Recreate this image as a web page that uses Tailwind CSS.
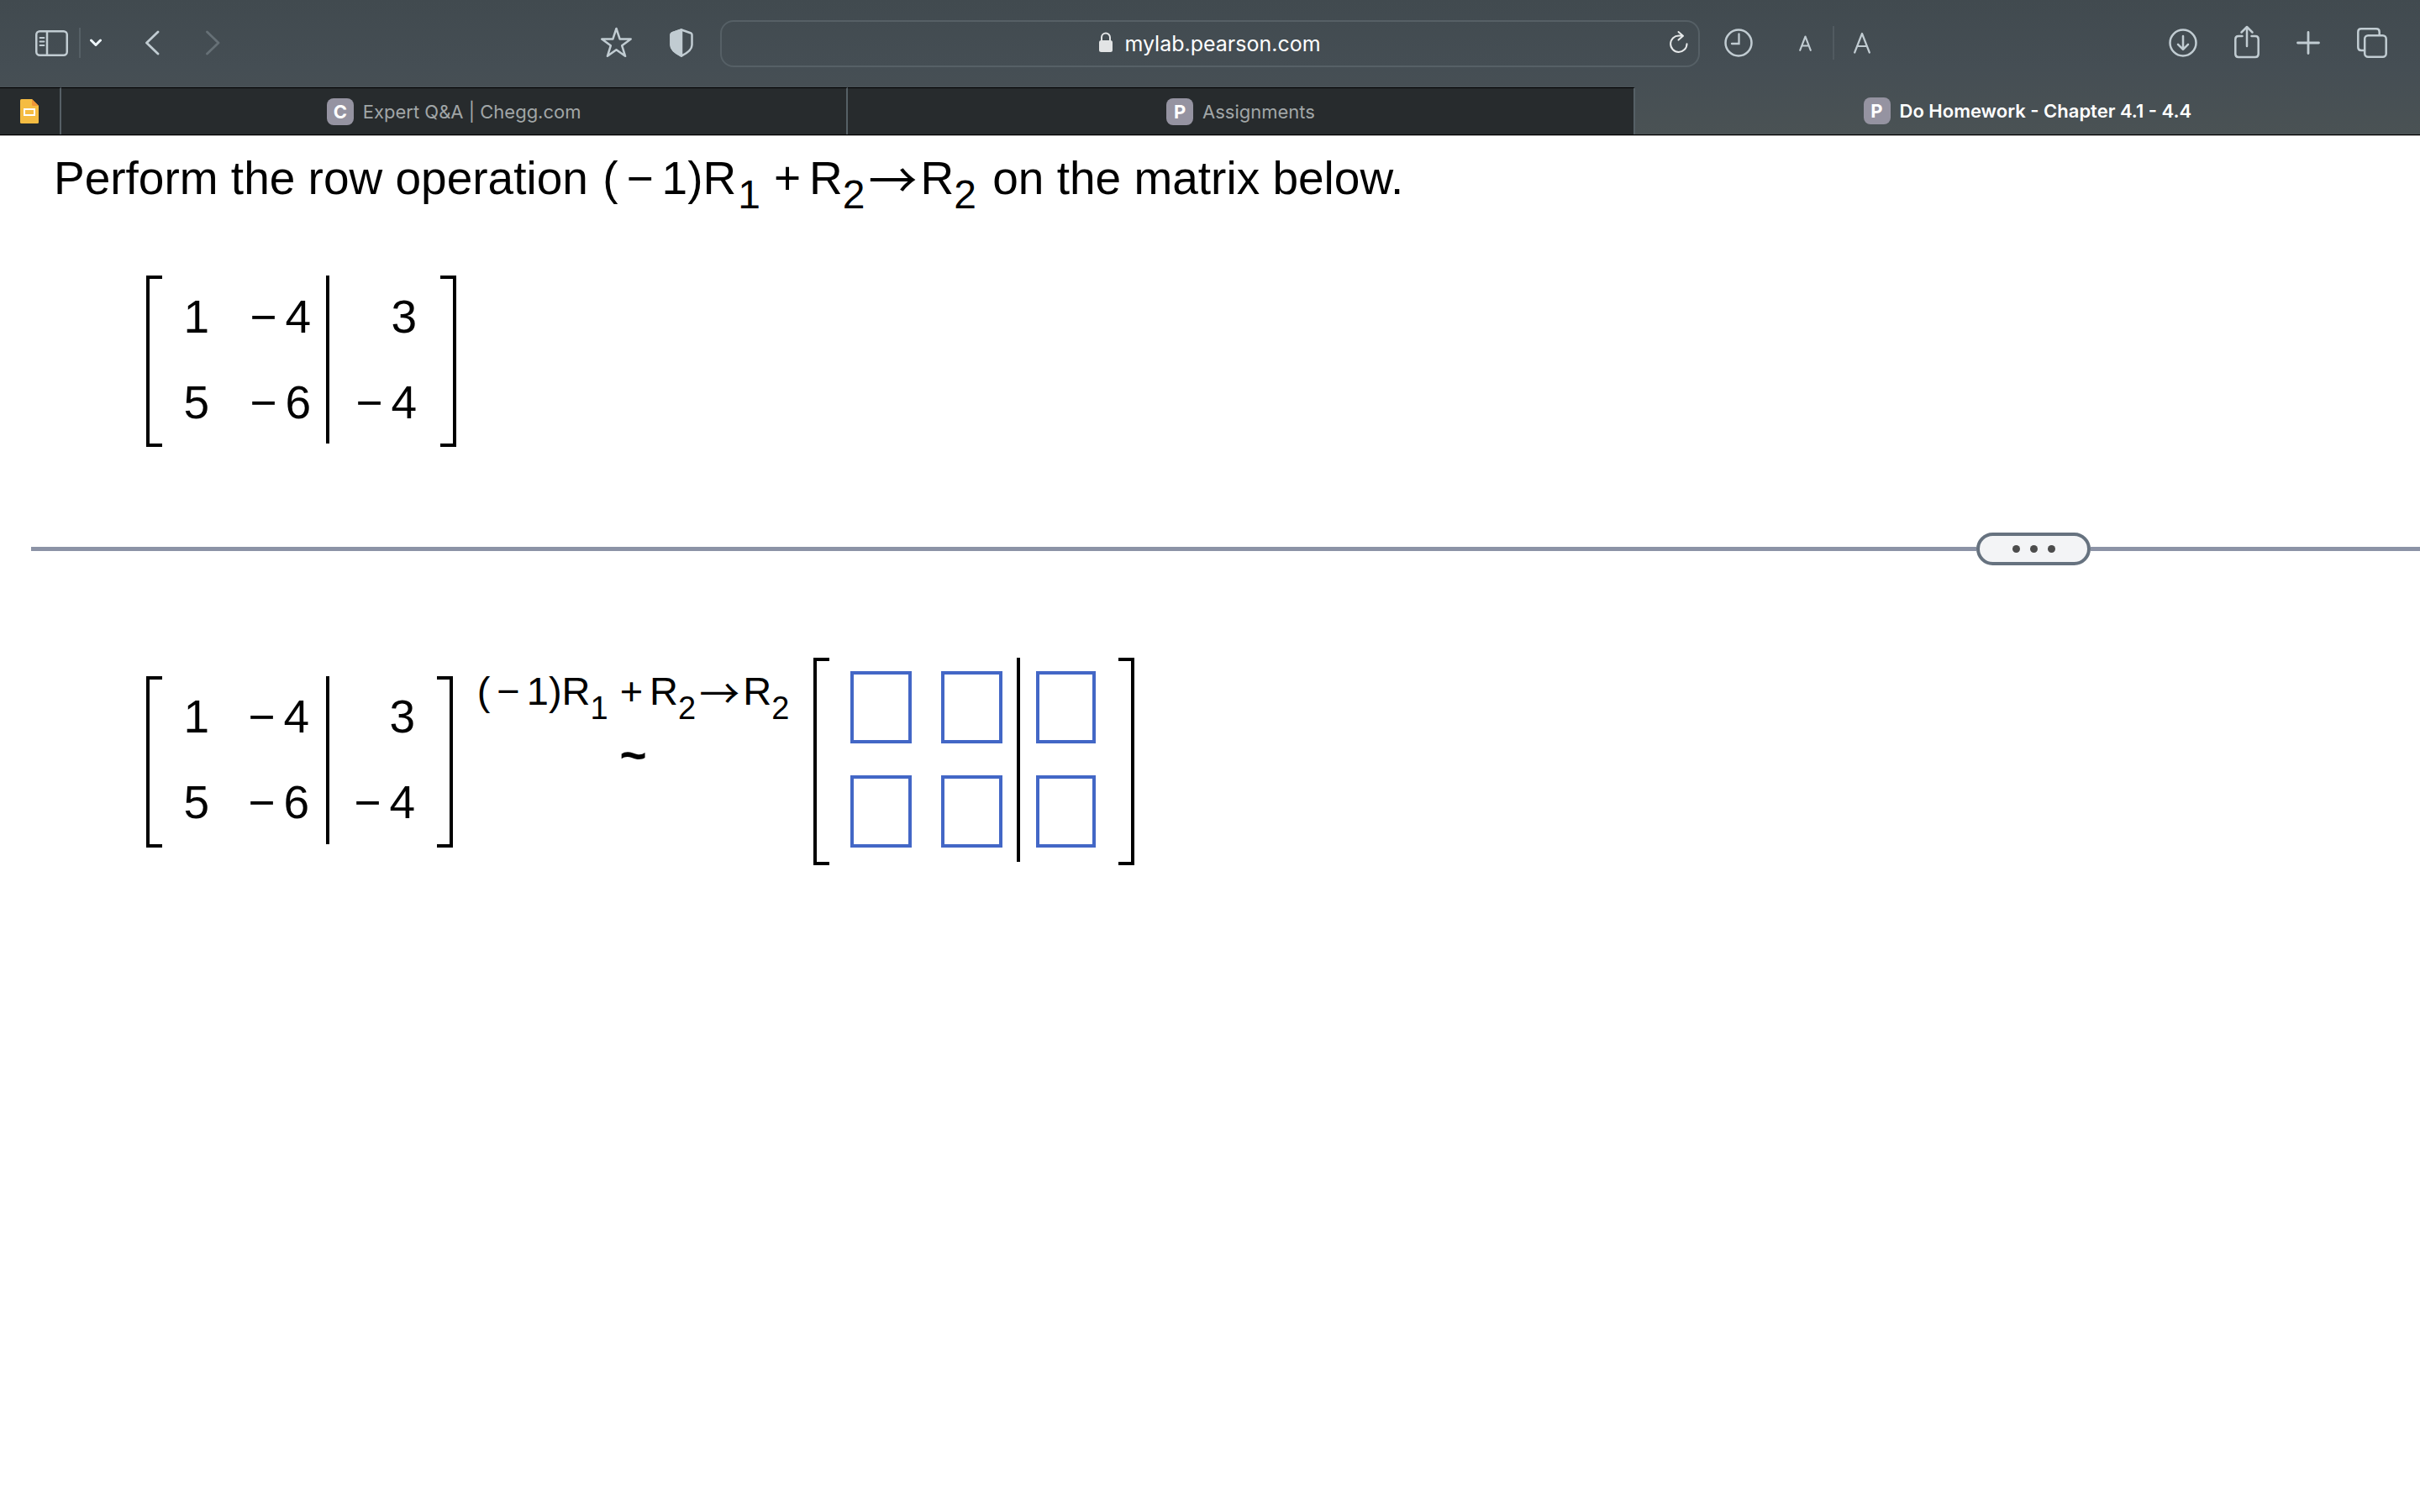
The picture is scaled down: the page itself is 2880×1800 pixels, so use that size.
<!DOCTYPE html>
<html lang="en">
<head>
  <meta charset="UTF-8" />
  <meta name="viewport" content="width=device-width, initial-scale=1.0" />
  <title>Do Homework - Chapter 4.1 - 4.4</title>
  <script src="https://cdn.jsdelivr.net/npm/@tailwindcss/browser@4"></script>
</head>
<body class="min-h-screen bg-white text-black font-['Liberation_Sans',Arial,sans-serif]">

  <header class="border-b border-[#b4b4b4] bg-linear-to-b from-[#414a4f] via-[#454e54] to-[#4a5254] font-[Inter,sans-serif]">

    <!-- Toolbar -->
    <div class="grid h-[104px] grid-cols-[1fr_1166px_1fr] items-center text-[#c1ccd2]">
      <div class="flex items-center justify-between pb-0.5 pl-[42px] pr-8">
        <div class="flex items-center">
          <button type="button" aria-label="Sidebar">
            <svg class="block" width="39" height="32" viewBox="0 0 39 32" fill="none" stroke="currentColor" stroke-width="2.5">
              <rect x="1.25" y="2.25" width="36.5" height="28.5" rx="4" />
              <path d="M14 2v29" />
              <path d="M5.500 10h5M5.500 14.500h5M5.500 19h5" stroke-width="1.800" stroke-linecap="round" />
            </svg>
          </button>
          <div class="ml-[13px] h-9 w-0.5 bg-[#566066]"></div>
          <button type="button" aria-label="Tab groups" class="ml-[11px] text-[#eef6fa]">
            <svg class="block" width="14" height="10" viewBox="0 0 14 10" fill="none" stroke="currentColor" stroke-width="3" stroke-linecap="round" stroke-linejoin="round"><path d="M1.500 2 7 7.500 12.500 2" /></svg>
          </button>
          <button type="button" aria-label="Back" class="ml-[52px]">
            <svg class="block" width="17" height="30" viewBox="0 0 17 30" fill="none" stroke="currentColor" stroke-width="2.800" stroke-linecap="round" stroke-linejoin="round"><path d="M15 2 1.500 15 15 28" /></svg>
          </button>
          <button type="button" aria-label="Forward" class="ml-[55px] text-[#667076]">
            <svg class="block" width="17" height="30" viewBox="0 0 17 30" fill="none" stroke="currentColor" stroke-width="2.800" stroke-linecap="round" stroke-linejoin="round"><path d="M1.500 2 15 15 1.500 28" /></svg>
          </button>
        </div>
        <div class="flex items-center gap-[45px]">
          <button type="button" aria-label="Bookmark">
            <svg class="block" width="37" height="38" viewBox="0 0 37 38" fill="none" stroke="currentColor" stroke-width="2.500" stroke-linejoin="round"><path d="M18.500 2l4.100 12.400 13.100.1-10.500 7.800 3.900 12.500-10.600-7.600-10.600 7.600 3.900-12.500L1.300 14.500l13.100-.1z" /></svg>
          </button>
          <button type="button" aria-label="Privacy report">
            <svg class="block" width="28" height="34" viewBox="0 0 28 34" fill="none" stroke="currentColor" stroke-width="2.500" stroke-linejoin="round">
              <path d="M14 1.500 25.500 5.500Q26.500 6 26.500 7.500V19.500Q26.500 26.500 14 32.500 1.500 26.500 1.500 19.500V7.500Q1.500 6 2.500 5.500z" />
              <path d="M14 1.500V32.500Q1.500 26.500 1.500 19.500V7.500Q1.500 6 2.500 5.500z" fill="currentColor" />
            </svg>
          </button>
        </div>
      </div>

      <div class="grid h-14 grid-cols-[1fr_auto_1fr] items-center rounded-2xl border-2 border-[#566066] px-3">
        <a href="#" class="col-start-2 flex items-center gap-3.5 text-[25px] leading-8 text-white">
          <svg class="mb-1" width="16" height="24" viewBox="0 0 16 24" fill="none"><path d="M3 11V6.500a5 5 0 0 1 10 0V11" stroke="#e2e4e5" stroke-width="2" /><rect y="10" width="16" height="14" rx="2.500" fill="#e2e4e5" /></svg>
          mylab.pearson.com
        </a>
        <button type="button" aria-label="Reload" class="justify-self-end pb-1 text-[#e6e9ea]">
          <svg class="block" width="22" height="28" viewBox="0 0 22 28" fill="none" stroke="currentColor" stroke-width="2" stroke-linecap="round" stroke-linejoin="round"><path d="M20.500 16.200A9.700 9.700 0 1 1 11 6.500h4.500M10.500 2l5.500 4.800-5.500 4.800" /></svg>
        </button>
      </div>

      <div class="flex items-center justify-between pb-0.5 pl-[29px] pr-[39px]">
        <div class="flex items-center">
          <button type="button" aria-label="History">
            <svg class="block" width="34" height="34" viewBox="0 0 34 34" fill="none" stroke="currentColor" stroke-width="2.500" stroke-linecap="round"><circle cx="17" cy="17" r="15.500" /><path d="M17.500 6.500V18H9" stroke-width="2.300" /></svg>
          </button>
          <button type="button" aria-label="Smaller text" class="ml-[55px]">
            <svg class="block" width="15" height="19" viewBox="0 0 15 19" fill="none" stroke="currentColor" stroke-width="2.100" stroke-linecap="round" stroke-linejoin="round"><path d="M1.200 17.800 7.500 1.500 13.800 17.800M3.300 12.500h8.400" /></svg>
          </button>
          <div class="ml-[25px] h-10 w-0.5 bg-[#515a60]"></div>
          <button type="button" aria-label="Larger text" class="ml-[23px]">
            <svg class="block" width="20" height="26" viewBox="0 0 20 26" fill="none" stroke="currentColor" stroke-width="2.200" stroke-linecap="round" stroke-linejoin="round"><path d="M1.200 24.500 10 2l8.800 22.500M4 17h12" /></svg>
          </button>
        </div>
        <div class="flex items-center gap-11">
          <button type="button" aria-label="Downloads">
            <svg class="block" width="34" height="34" viewBox="0 0 34 34" fill="none" stroke="currentColor" stroke-width="2.500" stroke-linecap="round" stroke-linejoin="round"><circle cx="17" cy="17" r="15.500" /><path d="M17 9v15.500M11 18.800l6 6 6-6" /></svg>
          </button>
          <button type="button" aria-label="Share" class="pb-0.5">
            <svg class="block" width="30" height="40" viewBox="0 0 30 40" fill="none" stroke="currentColor" stroke-width="2.500" stroke-linecap="round" stroke-linejoin="round"><path d="M9.500 13H5q-3.700 0-3.700 3.700v17.600Q1.300 38 5 38h20q3.700 0 3.700-3.700V16.700Q28.700 13 25 13h-4.500M15 25V3M8.500 8.500 15 2l6.500 6.500" /></svg>
          </button>
          <button type="button" aria-label="New tab">
            <svg class="block" width="28" height="28" viewBox="0 0 28 28" fill="none" stroke="currentColor" stroke-width="2.800" stroke-linecap="round"><path d="M14 1.500v25M1.500 14h25" /></svg>
          </button>
          <button type="button" aria-label="Tab overview">
            <svg class="block" width="36" height="36" viewBox="0 0 36 36" fill="none" stroke="currentColor" stroke-width="2.500" stroke-linejoin="round"><rect x="9.200" y="9.200" width="25.500" height="25.500" rx="4" /><path d="M9 27H5q-3.700 0-3.700-3.700V5Q1.300 1.300 5 1.300h18Q26.700 1.300 26.700 5v4" /></svg>
          </button>
        </div>
      </div>
    </div>

    <!-- Tabs -->
    <nav class="flex h-[57px] border-b border-black text-[22px] leading-7 text-[#a1a6a7]">
      <a href="#" aria-label="Pinned tab" class="flex w-[73px] items-center border-t border-t-black border-r-2 border-r-[#566066] bg-[#272b2d] pl-6">
        <svg width="22" height="29" viewBox="0 0 22 29"><path d="M1.500 0H14l8 8v19.500q0 1.500-1.500 1.500h-19Q0 29 0 27.500v-26Q0 0 1.500 0z" fill="#f5bc42" /><path d="M14 0l8 8h-6.500Q14 8 14 6.500z" fill="#ef9537" /><rect x="5" y="12" width="12" height="7" fill="none" stroke="#fff" stroke-width="2" /></svg>
      </a>
      <a href="#" class="flex flex-1 items-center justify-center gap-[11px] border-t border-t-black border-r-2 border-r-[#566066] bg-[#272b2d]">
        <span class="flex size-8 items-center justify-center rounded-lg bg-[#9593a1] font-bold text-white">C</span>
        Expert Q&amp;A | Chegg.com
      </a>
      <a href="#" class="flex flex-1 items-center justify-center gap-[11px] border-t border-t-black border-r-2 border-r-[#566066] bg-[#272b2d]">
        <span class="flex size-8 items-center justify-center rounded-lg bg-[#9593a1] font-bold text-white">P</span>
        Assignments
      </a>
      <a href="#" class="flex flex-1 items-center justify-center gap-[11px] font-semibold text-white">
        <span class="flex size-8 items-center justify-center rounded-lg bg-[#9593a1] font-bold text-white">P</span>
        Do Homework - Chapter 4.1 - 4.4
      </a>
    </nav>
  </header>

  <main class="pt-2.5 text-[55px]">
    <h1 class="pl-16 leading-[80px]">Perform the row operation <span class="ml-0.5">(</span><span class="mx-2.5">−</span>1)R<sub class="static ml-0.5 align-[-17px] text-[48px] leading-0">1</sub><span class="ml-4 mr-2.5">+</span>R<sub class="static align-[-17px] text-[48px] leading-0">2</sub><span class="mx-1 align-[-5px] font-['Noto_Sans_CJK_JP',sans-serif] text-[58px] leading-0">→</span>R<sub class="static mr-1 align-[-17px] text-[48px] leading-0">2</sub> on the matrix below.</h1>

    <!-- Given matrix -->
    <div class="mt-[76px] flex pl-[174px]">
      <div class="w-[19px] border-y-4 border-l-4 border-black"></div>
      <table class="mb-1 text-right leading-14">
        <tr class="h-[102px] align-top">
          <td class="w-14 pt-[21px]">1</td>
          <td class="w-[141px] border-r-4 border-black pt-[21px] pr-[18px]"><span class="mr-2.5">−</span>4</td>
          <td class="w-[134px] pt-[21px] pr-7">3</td>
        </tr>
        <tr class="h-[98px] align-top">
          <td class="pt-[21px]">5</td>
          <td class="border-r-4 border-black pt-[21px] pr-[18px]"><span class="mr-2.5">−</span>6</td>
          <td class="pt-[21px] pr-7"><span class="mr-2.5">−</span>4</td>
        </tr>
      </table>
      <div class="w-[19px] border-y-4 border-r-4 border-black"></div>
    </div>

    <!-- Divider with the handle -->
    <div class="mt-[102px] flex items-center pl-[37px]">
      <div class="h-[5px] flex-1 bg-[#8c93a6]"></div>
      <button type="button" aria-label="More" class="flex h-[39px] w-[136px] items-center justify-center gap-3 rounded-full border-4 border-[#66727f] bg-[#f3f4f6]">
        <span class="size-[9px] rounded-full bg-[#4c4c4c]"></span>
        <span class="size-[9px] rounded-full bg-[#4c4c4c]"></span>
        <span class="size-[9px] rounded-full bg-[#4c4c4c]"></span>
      </button>
      <div class="h-[5px] w-[392px] bg-[#8c93a6]"></div>
    </div>

    <!-- Answer -->
    <div class="mt-[110px] flex items-center pl-[174px]">
      <div class="flex">
        <div class="w-[19px] border-y-4 border-l-4 border-black"></div>
        <table class="mb-1 text-right leading-14">
          <tr class="h-[102px] align-top">
            <td class="w-14 pt-5">1</td>
            <td class="w-[141px] border-r-4 border-black pt-5 pr-5"><span class="mr-2.5">−</span>4</td>
            <td class="w-[130px] pt-5 pr-[26px]">3</td>
          </tr>
          <tr class="h-[98px] align-top">
            <td class="pt-5">5</td>
            <td class="border-r-4 border-black pt-5 pr-5"><span class="mr-2.5">−</span>6</td>
            <td class="pt-5 pr-[26px]"><span class="mr-2.5">−</span>4</td>
          </tr>
        </table>
        <div class="w-[19px] border-y-4 border-r-4 border-black"></div>
      </div>

      <div class="flex w-[429px] flex-col items-center self-start pt-2">
        <p class="text-[47px] leading-16 whitespace-nowrap">(<span class="mx-2">−</span>1)R<sub class="static align-[-17px] text-[38px] leading-0">1</sub><span class="ml-3.5 mr-2">+</span>R<sub class="static align-[-17px] text-[38px] leading-0">2</sub><span class="mx-1 align-[-4px] font-['Noto_Sans_CJK_JP',sans-serif] text-[48px] leading-0">→</span>R<sub class="static align-[-17px] text-[38px] leading-0">2</sub></p>
        <p class="mt-4 font-bold leading-14">~</p>
      </div>

      <div class="flex">
        <div class="w-[19px] border-y-4 border-l-4 border-black"></div>
        <table class="mb-1">
          <tr class="h-[124px] align-top">
            <td class="pt-4 pl-[25px]"><input type="text" aria-label="Row 1, column 1" class="block h-[86px] w-[73px] border-4 border-[#4367c6] text-center" /></td>
            <td class="border-r-4 border-black pt-4 pr-[17px] pl-[35px]"><input type="text" aria-label="Row 1, column 2" class="block h-[86px] w-[73px] border-4 border-[#4367c6] text-center" /></td>
            <td class="pt-4 pr-[27px] pl-[19px]"><input type="text" aria-label="Row 1, column 3" class="block h-[86px] w-[71px] border-4 border-[#4367c6] text-center" /></td>
          </tr>
          <tr class="h-[119px] align-top">
            <td class="pt-4 pl-[25px]"><input type="text" aria-label="Row 2, column 1" class="block h-[86px] w-[73px] border-4 border-[#4367c6] text-center" /></td>
            <td class="border-r-4 border-black pt-4 pr-[17px] pl-[35px]"><input type="text" aria-label="Row 2, column 2" class="block h-[86px] w-[73px] border-4 border-[#4367c6] text-center" /></td>
            <td class="pt-4 pr-[27px] pl-[19px]"><input type="text" aria-label="Row 2, column 3" class="block h-[86px] w-[71px] border-4 border-[#4367c6] text-center" /></td>
          </tr>
        </table>
        <div class="w-[19px] border-y-4 border-r-4 border-black"></div>
      </div>
    </div>
  </main>

</body>
</html>
